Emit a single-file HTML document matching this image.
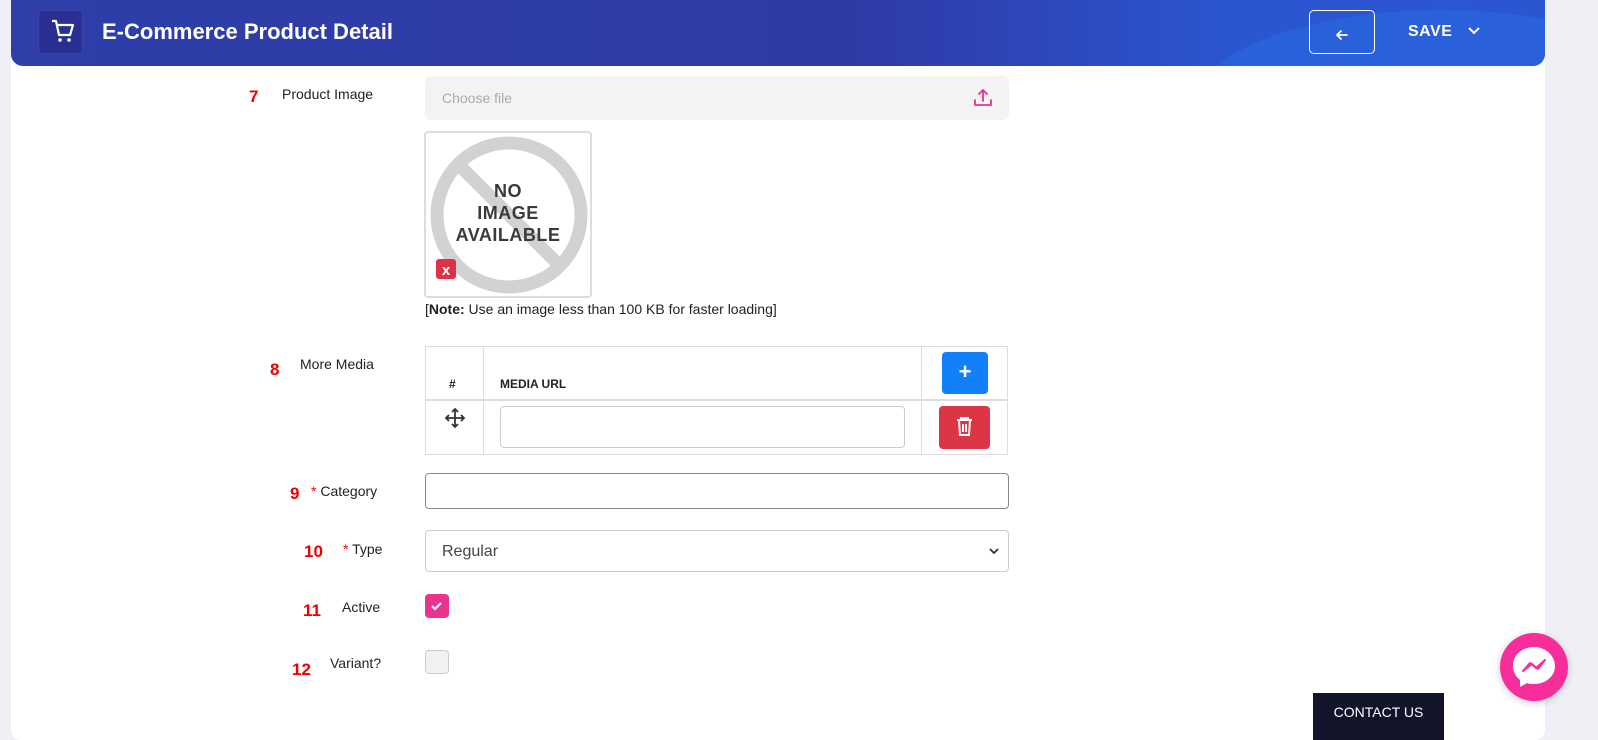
<!DOCTYPE html>
<html><head><meta charset="utf-8"><style>
*{box-sizing:border-box;margin:0;padding:0}
body{width:1598px;height:740px;overflow:hidden;background:#eef0f6;font-family:"Liberation Sans",sans-serif;position:relative;color:#222}
.card{position:absolute;left:11px;top:0;width:1534px;height:740px;background:#fff;border-radius:0 0 10px 10px}
.hdr{position:absolute;left:11px;top:0;width:1534px;height:66px;border-radius:0 0 12px 12px;background:linear-gradient(90deg,#2e3fa8 0%,#2f3aa6 55%,#2b56d0 80%,#2c55d2 100%);overflow:hidden}
.blob{position:absolute;border-radius:50%;background:rgba(40,110,230,.45)}
.abs{position:absolute}
.lbl{position:absolute;font-size:14px;color:#222;text-align:right}
.num{position:absolute;color:#e00;font-weight:bold;font-size:17px}
.inp{position:absolute;border:1px solid #c9ccd2;border-radius:4px;background:#fff}
</style></head><body>
<div class="card"></div>
<div class="hdr">
 <div class="blob" style="left:1180px;top:10px;width:500px;height:200px;"></div>
 <div class="abs" style="left:27px;top:10px;width:45px;height:44px;border-radius:5px;background:#2a2f93;border:1px solid #3b42a8">
  <svg width="45" height="44" viewBox="0 0 45 44"><path d="M13 10h4l3 14h11l3-10H18" fill="none" stroke="#fff" stroke-width="2.2" stroke-linejoin="round"/><circle cx="21" cy="29" r="1.8" fill="#fff"/><circle cx="30" cy="29" r="1.8" fill="#fff"/></svg>
 </div>
 <div class="abs" style="left:91px;top:19px;color:#fff;font-weight:bold;font-size:22px">E-Commerce Product Detail</div>
 <div class="abs" style="left:1298px;top:10px;width:66px;height:44px;border:1px solid #fff;border-radius:5px">
  <svg width="64" height="42" viewBox="0 0 64 42"><path d="M37 24H27M31 20l-4 4 4 4" fill="none" stroke="#fff" stroke-width="1.8" stroke-linecap="round" stroke-linejoin="round"/></svg>
 </div>
 <div class="abs" style="left:1397px;top:23px;color:#fff;font-weight:bold;font-size:16px;letter-spacing:.5px">SAVE</div>
 <svg class="abs" style="left:1456px;top:26px" width="14" height="10" viewBox="0 0 14 10"><path d="M2 2l5 5 5-5" fill="none" stroke="#fff" stroke-width="2"/></svg>
</div>

<div class="num" style="left:249px;top:87px">7</div>
<div class="lbl" style="left:282px;top:86px">Product Image</div>
<div class="abs" style="left:425px;top:76px;width:584px;height:44px;background:#f3f3f3;border-radius:6px"></div>
<div class="abs" style="left:442px;top:90px;color:#aaa;font-size:14px">Choose file</div>
<svg class="abs" style="left:972px;top:87px" width="22" height="22" viewBox="0 0 22 22"><path d="M11 14V3M7 7l4-4 4 4M3 13v5h16v-5" fill="none" stroke="#e8338f" stroke-width="1.8" stroke-linecap="round" stroke-linejoin="round"/></svg>

<div class="abs" style="left:424px;top:131px;width:168px;height:167px;border:2px solid #ddd;border-radius:4px;background:#fff;overflow:hidden">
 <svg width="164" height="163" viewBox="0 0 164 163"><circle cx="83" cy="82" r="72" fill="none" stroke="#d2d2d2" stroke-width="13"/><path d="M33 32L133 132" stroke="#d2d2d2" stroke-width="13"/></svg>
 <div class="abs" style="left:0;top:47px;width:164px;text-align:center;font-weight:bold;font-size:18px;line-height:22px;color:#3a3a3a;letter-spacing:.5px">NO<br>IMAGE<br>AVAILABLE</div>
 <div class="abs" style="left:10px;top:126px;width:20px;height:20px;background:#de3046;border-radius:3px;color:#fff;font-weight:bold;font-size:15px;text-align:center;line-height:24px">x</div>
</div>
<div class="abs" style="left:425px;top:301px;font-size:14px;color:#222">[<b>Note:</b> Use an image less than 100 KB for faster loading]</div>

<div class="num" style="left:270px;top:360px">8</div>
<div class="lbl" style="left:300px;top:356px">More Media</div>
<div class="abs" style="left:425px;top:346px;width:583px;height:109px;border:1px solid #ddd"></div>
<div class="abs" style="left:425px;top:399px;width:583px;height:2px;background:#ddd"></div>
<div class="abs" style="left:483px;top:346px;width:1px;height:109px;background:#ddd"></div>
<div class="abs" style="left:921px;top:346px;width:1px;height:109px;background:#ddd"></div>
<div class="abs" style="left:449px;top:377px;font-size:12px;font-weight:bold">#</div>
<div class="abs" style="left:500px;top:377px;font-size:12px;font-weight:bold;color:#222">MEDIA URL</div>
<div class="abs" style="left:942px;top:352px;width:46px;height:42px;background:#1281f7;border-radius:4px;color:#fff;font-size:22px;text-align:center;line-height:40px;font-weight:bold">+</div>
<svg class="abs" style="left:443px;top:406px" width="24" height="24" viewBox="0 0 24 24"><path d="M12 3v18M3 12h18M9 6l3-3 3 3M9 18l3 3 3-3M6 9l-3 3 3 3M18 9l3 3-3 3" fill="none" stroke="#333" stroke-width="1.8"/></svg>
<div class="inp" style="left:500px;top:406px;width:405px;height:42px"></div>
<div class="abs" style="left:939px;top:406px;width:51px;height:43px;background:#dc3545;border-radius:4px">
 <svg width="51" height="43" viewBox="0 0 51 43"><path d="M18 14h15M22 14v-2h7v2M20 14l1 15h9l1-15M24 18v8M27 18v8" fill="none" stroke="#fff" stroke-width="2"/></svg>
</div>

<div class="num" style="left:290px;top:484px">9</div>
<div class="abs" style="left:311px;top:483px;font-size:14px"><span style="color:#e00">*</span> Category</div>
<div class="inp" style="left:425px;top:473px;width:584px;height:36px;border-color:#888"></div>

<div class="num" style="left:304px;top:542px">10</div>
<div class="abs" style="left:343px;top:541px;font-size:14px"><span style="color:#e00">*</span> Type</div>
<div class="inp" style="left:425px;top:530px;width:584px;height:42px"></div>
<div class="abs" style="left:442px;top:543px;font-size:16px;color:#444">Regular</div>
<svg class="abs" style="left:988px;top:546px" width="12" height="10" viewBox="0 0 12 10"><path d="M2 3l4 4 4-4" fill="none" stroke="#333" stroke-width="1.8"/></svg>

<div class="num" style="left:303px;top:601px">11</div>
<div class="lbl" style="left:342px;top:599px">Active</div>
<div class="abs" style="left:425px;top:594px;width:24px;height:24px;background:#e8338f;border-radius:4px">
 <svg width="24" height="24" viewBox="0 0 24 24"><path d="M7 12l3 3 6-6" fill="none" stroke="#fff" stroke-width="2.2"/></svg>
</div>

<div class="num" style="left:292px;top:660px">12</div>
<div class="lbl" style="left:330px;top:655px">Variant?</div>
<div class="abs" style="left:425px;top:650px;width:24px;height:24px;background:#f2f2f2;border:1px solid #ccc;border-radius:4px"></div>

<div class="abs" style="left:1313px;top:693px;width:131px;height:47px;background:#12142a;color:#fff;font-size:14px;text-align:center;line-height:38px">CONTACT US</div>
<div class="abs" style="left:1500px;top:633px;width:68px;height:68px;border-radius:50%;background:#f62d9b;box-shadow:0 2px 8px rgba(0,0,0,.2)">
 <svg width="68" height="68" viewBox="0 0 68 68"><path d="M34 14c-12 0-21 8-21 19 0 6 3 11 7 14v7l7-4c2 1 4 1 7 1 12 0 21-8 21-18S46 14 34 14z" fill="#fff"/><path d="M23 38l7-8 6 5 9-8-7 9-6-5z" fill="#f62d9b" stroke="#f62d9b" stroke-width="2" stroke-linejoin="round"/></svg>
</div>
</body></html>
